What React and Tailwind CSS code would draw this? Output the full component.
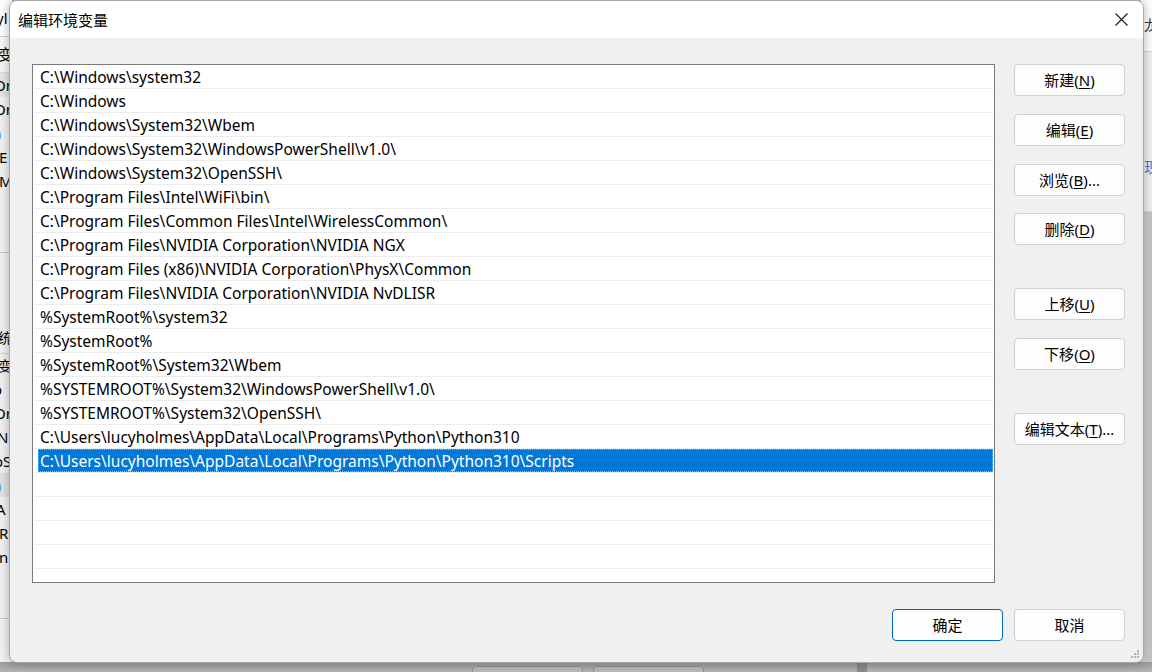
import React from "react";

const paths = [
    "C:\\Windows\\system32",
    "C:\\Windows",
    "C:\\Windows\\System32\\Wbem",
    "C:\\Windows\\System32\\WindowsPowerShell\\v1.0\\",
    "C:\\Windows\\System32\\OpenSSH\\",
    "C:\\Program Files\\Intel\\WiFi\\bin\\",
    "C:\\Program Files\\Common Files\\Intel\\WirelessCommon\\",
    "C:\\Program Files\\NVIDIA Corporation\\NVIDIA NGX",
    "C:\\Program Files (x86)\\NVIDIA Corporation\\PhysX\\Common",
    "C:\\Program Files\\NVIDIA Corporation\\NVIDIA NvDLISR",
    "%SystemRoot%\\system32",
    "%SystemRoot%",
    "%SystemRoot%\\System32\\Wbem",
    "%SYSTEMROOT%\\System32\\WindowsPowerShell\\v1.0\\",
    "%SYSTEMROOT%\\System32\\OpenSSH\\",
    "C:\\Users\\lucyholmes\\AppData\\Local\\Programs\\Python\\Python310",
    "C:\\Users\\lucyholmes\\AppData\\Local\\Programs\\Python\\Python310\\Scripts",
];

const font = "font-['Segoe_UI','Noto_Sans','Noto_Sans_CJK_SC',sans-serif]";

function Btn({ label, mk, after = "", primary }) {
    return (
        <button
            className={`w-[111px] h-[32px] rounded-[4px] bg-[#fdfdfd] text-[15px] text-black flex items-center justify-center pt-[1px] ${
                primary ? "border border-[#0067c0]" : "border border-[#d0d0d0]"
            }`}
        >
            {label}
            {mk && (
                <>
                    (<span className="underline underline-offset-2">{mk}</span>){after}
                </>
            )}
        </button>
    );
}

export default function App() {
    const rows = [...paths, "", "", "", "", "", ""];
    return (
        <div className={`relative w-[1152px] h-[672px] overflow-hidden bg-[#b4b4b4] ${font}`}>
            {/* background window on the left */}
            <div className="absolute left-0 top-0 w-[12px] h-[662px] bg-[#f3f3f3] overflow-hidden text-[15px] text-black leading-none whitespace-nowrap">
                <div className="h-[37px] bg-white flex items-center border-b border-[#d6d6d6] -ml-[4px]">yl</div>
                <div className="h-[36px] flex items-center -ml-[2px] bg-[#f9f9f9] border-b border-[#e0e0e0]">变量</div>
                <div className="h-[24px] flex items-center -ml-[6px] bg-[#e8e8e8]">Or</div>
                <div className="h-[24px] flex items-center -ml-[6px]">Or</div>
                <div className="h-[24px] flex items-center -ml-[7px]">a</div>
                <div className="h-[24px] flex items-center -ml-[1px]">E</div>
                <div className="h-[24px] flex items-center -ml-[1px]">M</div>
                <div className="h-[60px] border-b border-[#c8c8c8]"></div>
                <div className="h-[70px]"></div>
                <div className="h-[30px] flex items-center -ml-[2px] text-[14px]">统</div>
                <div className="h-[24px] flex items-center -ml-[2px] text-[14px] border-t border-[#d6d6d6]">变</div>
                <div className="h-[24px] flex items-center -ml-[7px]">o</div>
                <div className="h-[24px] flex items-center -ml-[6px]">Or</div>
                <div className="h-[24px] flex items-center -ml-[3px]">NU</div>
                <div className="h-[24px] flex items-center -ml-[6px]">oS</div>
                <div className="h-[24px] flex items-center -ml-[7px] bg-[#e2e2e2]">a</div>
                <div className="h-[24px] flex items-center -ml-[4px]">A</div>
                <div className="h-[24px] flex items-center -ml-[1px]">R</div>
                <div className="h-[24px] flex items-center -ml-[1px]">n</div>
                <div className="h-[50px] border-b border-[#c8c8c8]"></div>
            </div>

            {/* background window on the right */}
            <div className="absolute left-[1140px] top-0 w-[12px] h-[662px] bg-[#f1f1f1] overflow-hidden text-[15px] leading-none whitespace-nowrap border-l border-[#d9d9d9]">
                <div className="h-[52px] flex items-center pl-[3px] text-[#333] border-b border-[#d8d8d8] bg-white">龙</div>
                <div className="h-[100px]"></div>
                <div className="h-[30px] flex items-center pl-[3px] text-[#3a7bd5]">现</div>
                <div className="h-[30px] border-b border-[#d8d8d8]"></div>
                <div className="h-[450px] bg-gradient-to-r from-[#d9d9d9] to-[#c4c4c4]"></div>
            </div>

            {/* bottom desktop strip */}
            <div className="absolute left-0 top-[662px] w-[1152px] h-[10px] bg-gradient-to-b from-[#9c9c9c] to-[#b4b4b4]">
                <div className="absolute left-[472px] top-[4px] w-[111px] h-[10px] rounded-t-[4px] border border-[#8f8f8f] bg-[#b9b9b9]"></div>
                <div className="absolute left-[593px] top-[4px] w-[111px] h-[10px] rounded-t-[4px] border border-[#8f8f8f] bg-[#b9b9b9]"></div>
                <div className="absolute left-[857px] top-0 w-[10px] h-[10px] bg-[#8a8a8a]"></div>
            </div>

            {/* dialog */}
            <div className="absolute left-[9px] top-0 w-[1135px] h-[663px] rounded-[8px] overflow-hidden bg-[#f0f0f0] border border-[#a8a8a8] shadow-[0_0_12px_rgba(0,0,0,0.3)] flex flex-col">
                <div className="h-[37px] bg-white flex items-center justify-between pl-[8px] pr-[14px] shrink-0">
                    <span className="text-[15px] text-black font-['Noto_Sans_CJK_SC',sans-serif] mt-[1px]">编辑环境变量</span>
                    <svg width="13" height="13" viewBox="0 0 13 13" className="mr-[1px]">
                        <path d="M0.5 0.5 L12.5 12.5 M12.5 0.5 L0.5 12.5" stroke="#1a1a1a" strokeWidth="1.1" />
                    </svg>
                </div>

                <div className="flex-1 flex flex-col pl-[22px] pr-[18px] pt-[26px] relative">
                    <div className="flex gap-[19px]">
                        <div className="w-[964px] h-[519px] border border-[#7a7a7a] bg-white overflow-hidden">
                            {rows.map((p, i) => {
                                const sel = i === paths.length - 1;
                                return (
                                    <div key={i} className="h-[24px] mx-[1px] border-b border-[#ececec] flex">
                                        <div
                                            className={`flex-1 flex items-center text-[15.5px] leading-none whitespace-nowrap pt-[2px] ${
                                                sel
                                                    ? "ml-[4px] bg-[#0078d7] text-white outline-1 outline-dotted outline-[#f7a234] -outline-offset-1 pl-[2px]"
                                                    : "text-black pl-[6px]"
                                            }`}
                                        >
                                            {p}
                                        </div>
                                    </div>
                                );
                            })}
                        </div>

                        <div className="flex flex-col">
                            <Btn label="新建" mk="N" />
                            <div className="mt-[18px]"><Btn label="编辑" mk="E" /></div>
                            <div className="mt-[18px]"><Btn label="浏览" mk="B" after="..." /></div>
                            <div className="mt-[17px]"><Btn label="删除" mk="D" /></div>
                            <div className="mt-[43px]"><Btn label="上移" mk="U" /></div>
                            <div className="mt-[18px]"><Btn label="下移" mk="O" /></div>
                            <div className="mt-[43px]"><Btn label="编辑文本" mk="T" after="..." /></div>
                        </div>
                    </div>

                    <div className="flex justify-end gap-[11px] mt-[26px]">
                        <Btn label="确定" primary />
                        <Btn label="取消" />
                    </div>

                    <svg width="10" height="10" viewBox="0 0 10 10" className="absolute right-[3px] bottom-[3px]">
                        <g fill="#b4b4b4">
                            <rect x="7" y="1" width="2" height="2" />
                            <rect x="4" y="4" width="2" height="2" />
                            <rect x="7" y="4" width="2" height="2" />
                            <rect x="1" y="7" width="2" height="2" />
                            <rect x="4" y="7" width="2" height="2" />
                            <rect x="7" y="7" width="2" height="2" />
                        </g>
                    </svg>
                </div>
            </div>
        </div>
    );
}
